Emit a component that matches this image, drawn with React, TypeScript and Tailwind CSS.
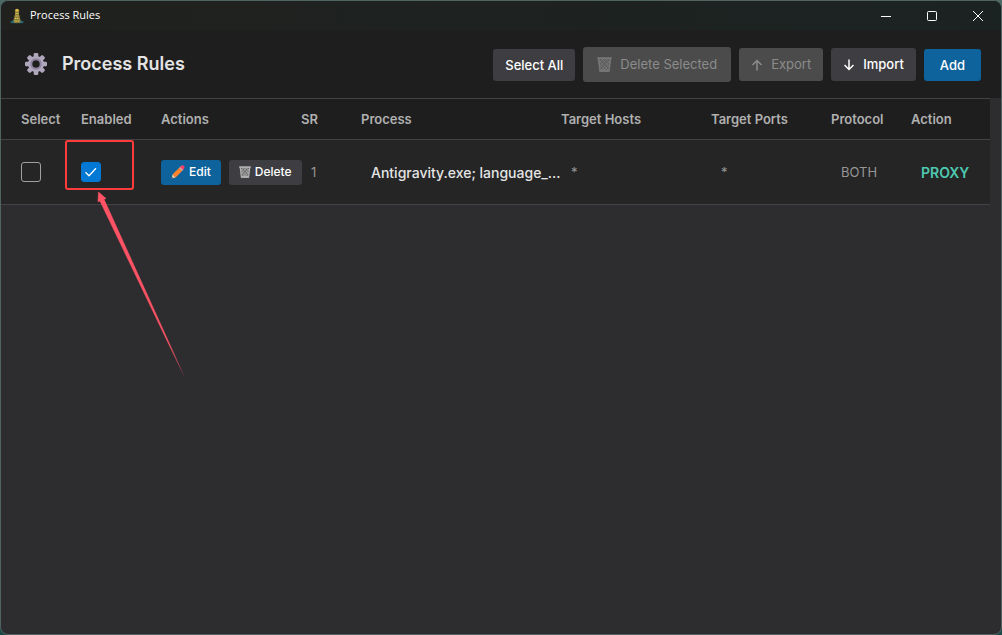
import { useState } from "react";

const rules = [
    {
        id: 1,
        process: "Antigravity.exe; language_...",
        hosts: "*",
        ports: "*",
        protocol: "BOTH",
        action: "PROXY",
    },
];

function AppLogo() {
    return (
        <svg width="16" height="16" viewBox="0 0 16 16" aria-hidden="true">
            <path d="M.8 14 4 12.500 5.500 9.500h5l1.500 3 3.200 1.500-2.200 1.200H3z" fill="#2b6872" />
            <path d="M6.500 1h3l.8 2-.5 2.500 1.200 4 .5 4.500-1.500 1H6l-1.500-1 .5-4.500 1.200-4L5.700 3z" fill="#8c7c34" />
            <circle cx="8" cy="2.200" r="1.500" fill="#d9b94a" />
            <path d="M6.500 5.500h3M6.500 8h3M6 10.500h4M5.500 13h5" stroke="#e3cd6c" strokeWidth="1.200" strokeDasharray="1.200 .6" />
        </svg>
    );
}

function GearIcon() {
    return (
        <svg width="22" height="22" viewBox="0 0 22 22" aria-hidden="true">
            <g fill="#b1a7bd">
                <rect x="8.700" y="0" width="4.600" height="22" rx="1.200" />
                <rect x="8.700" y="0" width="4.600" height="22" rx="1.200" transform="rotate(45 11 11)" />
                <rect x="8.700" y="0" width="4.600" height="22" rx="1.200" transform="rotate(90 11 11)" />
                <rect x="8.700" y="0" width="4.600" height="22" rx="1.200" transform="rotate(135 11 11)" />
                <circle cx="11" cy="11" r="8" />
            </g>
            <circle cx="11" cy="11" r="5" fill="none" stroke="#8d7f9e" strokeWidth="1.400" />
            <circle cx="11" cy="11" r="3.800" fill="#1e1e1e" />
        </svg>
    );
}

function TrashIcon({ className }: { className?: string }) {
    return (
        <svg viewBox="0 0 14 14" fill="none" stroke="currentColor" className={className} aria-hidden="true">
            <path d="M1 2h12L11.500 13.500h-9z" fill="currentColor" fillOpacity=".4" stroke="none" />
            <path d="M.3 1.200h13.400" strokeWidth="2" />
            <path d="M1.500 2 2.800 13h8.400L12.500 2" strokeWidth="1.400" />
            <path d="M2 3.500 10.500 12.500M5 2l6.500 7M8.500 2l3.500 4M2.500 7l5.500 6M12 3.500 3.500 12.500M9 2 2.500 9M5.500 2 2 6M11.500 7 6 13" strokeWidth=".9" />
            <path d="M2.600 12.700h8.800" strokeWidth="2" />
        </svg>
    );
}

function PencilIcon() {
    return (
        <svg width="14" height="14" viewBox="0 0 13 13" aria-hidden="true">
            <path d="M.5 12.500 1.500 8.700l2.800 2.800z" fill="#f5cfa8" />
            <path d="m.5 12.500.4-1.500 1.100 1.100z" fill="#3c3c3c" />
            <path d="M1.500 8.700 7.700 2.500l2.800 2.800-6.200 6.200z" fill="#ff822d" />
            <path d="m7.700 2.500 1-1 2.800 2.800-1 1z" fill="#d3d3d3" />
            <path d="m8.200 2 1.200-1.200c.8-.8 2-.6 2.600 0 .7.7.8 1.900 0 2.700l-1 1.200z" fill="#f8416a" />
        </svg>
    );
}

function ArrowIcon({ up }: { up?: boolean }) {
    return (
        <svg width="12" height="12" viewBox="0 0 12 12" fill="none" stroke="currentColor" strokeWidth="1.500" aria-hidden="true">
            <path d={up ? "M6 11.500V1.500M1.500 6 6 1.500 10.500 6" : "M6 .5v10M1.500 6 6 10.500 10.500 6"} />
        </svg>
    );
}

export default function App() {
    const [selected, setSelected] = useState<number[]>([]);
    const [enabled, setEnabled] = useState<number[]>([1]);

    const toggle = (list: number[], id: number) =>
        list.includes(id) ? list.filter((x) => x !== id) : [...list, id];

    const nothingSelected = selected.length === 0;

    return (
        <div className="flex min-h-screen flex-col bg-linear-to-b from-[#4b6a66] to-[#1c4a46] font-['Inter',sans-serif]">
            <div className="relative flex flex-1 flex-col overflow-hidden rounded-lg border border-[#4f6360] bg-[#2d2d30]">
                <div className="flex h-[29px] items-center bg-linear-to-r from-[#20211e] to-[#1b2322] pl-2">
                    <AppLogo />
                    <span className="ml-[5px] flex-1 font-['Open_Sans','Noto_Sans',sans-serif] text-[11px] text-white">Process Rules</span>
                    <button type="button" aria-label="Minimize" className="flex h-full w-[46px] items-center justify-center text-white">
                        <svg width="10" height="10" viewBox="0 0 10 10" stroke="currentColor"><path d="M0 5.500h10" /></svg>
                    </button>
                    <button type="button" aria-label="Maximize" className="flex h-full w-[46px] items-center justify-center text-white">
                        <svg width="10" height="10" viewBox="0 0 10 10" fill="none" stroke="currentColor"><rect x=".5" y=".5" width="9" height="9" rx="1" /></svg>
                    </button>
                    <button type="button" aria-label="Close" className="flex h-full w-[46px] items-center justify-center text-white">
                        <svg width="10" height="10" viewBox="0 0 10 10" stroke="currentColor"><path d="m0 0 10 10M10 0 0 10" /></svg>
                    </button>
                </div>

                <header className="flex h-[68px] items-center justify-between bg-[#1e1e1e] pr-5 pl-6">
                    <div className="flex items-center gap-[15px]">
                        <GearIcon />
                        <h1 className="text-lg font-semibold text-[#e4e4e4]">Process Rules</h1>
                    </div>
                    <div className="flex items-center gap-2 pt-px text-[13px] font-medium text-white">
                        <button
                            type="button"
                            onClick={() => setSelected(nothingSelected ? rules.map((r) => r.id) : [])}
                            className="h-8 rounded-[3px] bg-[#3e3e42] px-3 pt-[2px]"
                        >
                            Select All
                        </button>
                        <button
                            type="button"
                            disabled={nothingSelected}
                            className="flex h-[35px] items-center gap-2 rounded-[3px] bg-[#3e3e42] px-[14px] font-normal disabled:bg-[#4b4b4b] disabled:text-[#8b8b8b]"
                        >
                            <TrashIcon className="size-[15px] text-[#777777]" />
                            Delete Selected
                        </button>
                        <button
                            type="button"
                            disabled={nothingSelected}
                            className="flex h-[33px] items-center gap-2 rounded-[3px] bg-[#3e3e42] px-3 font-normal disabled:bg-[#4b4b4b] disabled:text-[#8b8b8b]"
                        >
                            <ArrowIcon up />
                            Export
                        </button>
                        <button type="button" className="flex h-[33px] items-center gap-2 rounded-[3px] bg-[#3e3e42] px-3">
                            <ArrowIcon />
                            Import
                        </button>
                        <button type="button" className="h-8 rounded-[3px] bg-[#0e639c] px-4 pt-[2px]">
                            Add
                        </button>
                    </div>
                </header>

                <main className="pr-[11px]">
                    <table className="w-full table-fixed text-left text-[13px]">
                        <thead className="border-y border-[#434346] bg-[#1e1e1e] text-[#b0b0b0]">
                            <tr className="h-[41px] *:p-0 *:pt-[2px] *:font-semibold">
                                <th className="w-20"><span className="pl-5">Select</span></th>
                                <th className="w-20">Enabled</th>
                                <th className="w-[140px]">Actions</th>
                                <th className="w-[60px]">SR</th>
                                <th>Process</th>
                                <th className="w-[150px]">Target Hosts</th>
                                <th className="w-[120px]">Target Ports</th>
                                <th className="w-20">Protocol</th>
                                <th className="w-[79px]">Action</th>
                            </tr>
                        </thead>
                        <tbody>
                            {rules.map((rule, i) => (
                                <tr key={rule.id} className="h-[65px] border-b border-[#434346] bg-[#252526] text-[#969696]">
                                    <td className="p-0">
                                        <input
                                            type="checkbox"
                                            aria-label="Select rule"
                                            checked={selected.includes(rule.id)}
                                            onChange={() => setSelected(toggle(selected, rule.id))}
                                            className="ml-5 block size-5 appearance-none rounded-[3px] border border-[#a0a0a0] checked:border-[#0078d4] checked:bg-[#0078d4]"
                                        />
                                    </td>
                                    <td className="p-0">
                                        <div className="relative size-5">
                                            <input
                                                type="checkbox"
                                                aria-label="Enable rule"
                                                checked={enabled.includes(rule.id)}
                                                onChange={() => setEnabled(toggle(enabled, rule.id))}
                                                className="block size-5 appearance-none rounded-[3px] border border-[#a0a0a0] checked:border-[#0078d4] checked:bg-[#0078d4]"
                                            />
                                            {enabled.includes(rule.id) && (
                                                <svg className="pointer-events-none absolute inset-0 text-white" width="20" height="20" viewBox="0 0 20 20" fill="none" stroke="currentColor" strokeWidth="1.300">
                                                    <path d="m4.500 10.200 3.500 3.500 7-7.400" />
                                                </svg>
                                            )}
                                            {/* callout around the enabled box */}
                                            <div className="pointer-events-none absolute -top-[22px] -left-4 h-[50px] w-[69px] rounded-[3px] border-2 border-[#ff3b3b]" />
                                            <svg className="pointer-events-none absolute top-[29px] left-[14px]" width="92" height="190" viewBox="0 0 92 190" aria-hidden="true">
                                                <defs>
                                                    <linearGradient id="tail" gradientUnits="userSpaceOnUse" x1="2" y1="2" x2="90" y2="188">
                                                        <stop offset=".8" stopColor="#ff5365" />
                                                        <stop offset="1" stopColor="#ff5365" stopOpacity="0" />
                                                    </linearGradient>
                                                </defs>
                                                <path d="M3.500 1 11 7.500 9 8.300 90 187 5 10 3 10.800z" fill="url(#tail)" stroke="url(#tail)" strokeWidth=".6" strokeLinejoin="round" />
                                            </svg>
                                        </div>
                                    </td>
                                    <td className="p-0">
                                        <div className="flex gap-2 text-xs font-medium text-white">
                                            <button type="button" className="flex h-[25px] items-center gap-1 rounded-[3px] bg-[#0e639c] px-[10px]">
                                                <PencilIcon />
                                                Edit
                                            </button>
                                            <button type="button" className="flex h-[25px] items-center gap-1 rounded-[3px] bg-[#3e3e42] px-[10px]">
                                                <TrashIcon className="size-3 text-[#b0b0b0]" />
                                                Delete
                                            </button>
                                        </div>
                                    </td>
                                    <td className="p-0 pt-[2px] pl-[10px]">{i + 1}</td>
                                    <td className="p-0 pt-[2px] pl-[10px] text-sm font-medium whitespace-nowrap text-[#e4e4e4]">{rule.process}</td>
                                    <td className="p-0 pt-[2px] pl-[10px]">{rule.hosts}</td>
                                    <td className="p-0 pt-[2px] pl-[10px]">{rule.ports}</td>
                                    <td className="p-0 pt-[2px] pl-[10px]">{rule.protocol}</td>
                                    <td className="p-0 pt-[2px] pl-[10px] text-sm font-semibold text-[#4ec9b0]">{rule.action}</td>
                                </tr>
                            ))}
                        </tbody>
                    </table>
                </main>
            </div>
        </div>
    );
}
